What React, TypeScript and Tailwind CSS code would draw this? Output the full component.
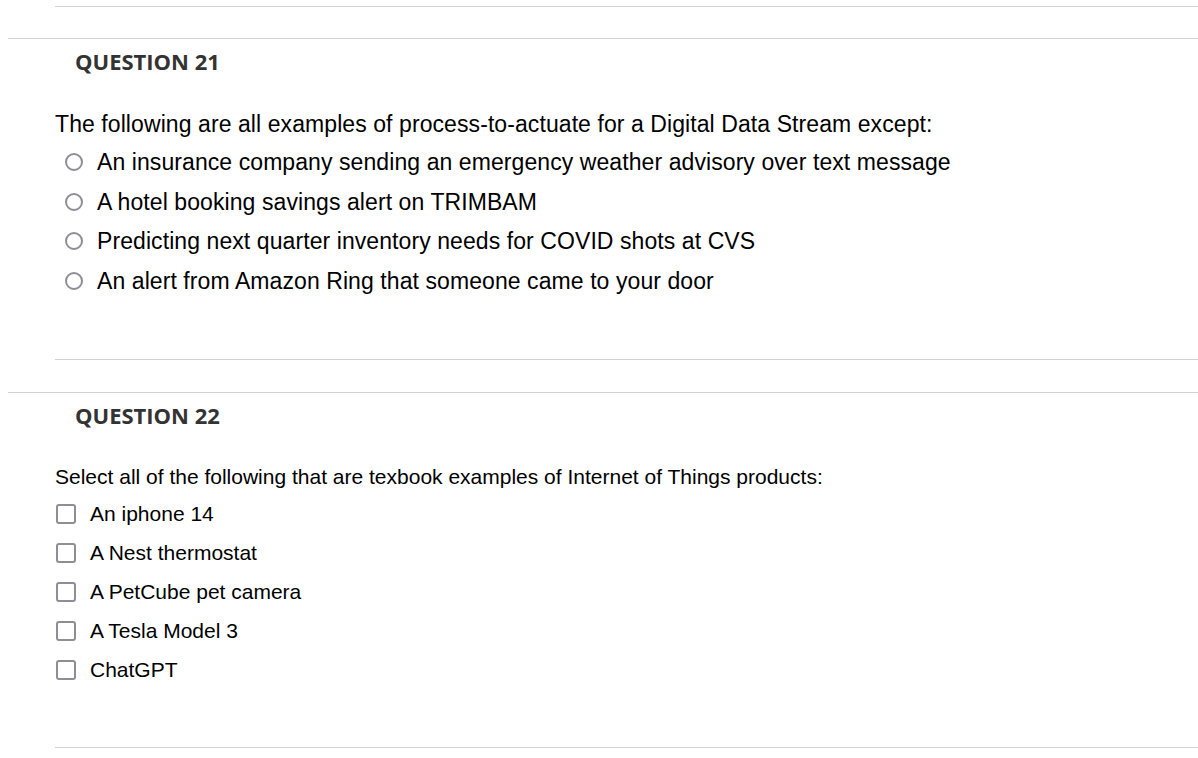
import React from "react";

const Radio = () => (
  <span className="inline-block w-[18px] h-[18px] rounded-full border-[2.5px] border-[#8f8e98] bg-white shrink-0" />
);

const Check = () => (
  <span className="inline-block w-[20px] h-[20px] rounded-[3px] border-[2.5px] border-[#8f8e98] bg-white shrink-0" />
);

export default function App() {
  const q21 = [
    "An insurance company sending an emergency weather advisory over text message",
    "A hotel booking savings alert on TRIMBAM",
    "Predicting next quarter inventory needs for COVID shots at CVS",
    "An alert from Amazon Ring that someone came to your door",
  ];
  const q22 = [
    "An iphone 14",
    "A Nest thermostat",
    "A PetCube pet camera",
    "A Tesla Model 3",
    "ChatGPT",
  ];
  return (
    <div className="w-[1198px] h-[758px] bg-white overflow-hidden" style={{ fontFamily: '"Liberation Sans", Arial, sans-serif' }}>
      <div className="pt-[6px] pl-[55px]">
        <div className="border-t border-[#d3d3d3]" />
      </div>
      <div className="mt-[31px] ml-[8px] border-t border-[#d3d3d3]">
        <div className="pl-[67px] pt-[7px] text-[22px] font-bold text-[#333333] leading-[30px]" style={{ fontFamily: '"Open Sans", sans-serif' }}>
          QUESTION 21
        </div>
        <div className="pl-[47px] mt-[36px] text-[23px] tracking-[0.08px] text-black leading-[24px]">
          The following are all examples of process-to-actuate for a Digital Data Stream except:
        </div>
        <div className="pl-[57px] mt-[14px] flex flex-col gap-[15.5px]">
          {q21.map((t) => (
            <div key={t} className="flex items-center gap-[14px] text-[23px] tracking-[0.08px] leading-[24px] text-black">
              <Radio />
              <span>{t}</span>
            </div>
          ))}
        </div>
      </div>
      <div className="mt-[66px] pl-[55px]">
        <div className="border-t border-[#d3d3d3]" />
      </div>
      <div className="mt-[32px] ml-[8px] border-t border-[#d3d3d3]">
        <div className="pl-[67px] pt-[7px] text-[22px] font-bold text-[#333333] leading-[30px]" style={{ fontFamily: '"Open Sans", sans-serif' }}>
          QUESTION 22
        </div>
        <div className="pl-[47px] mt-[36px] text-[21px] text-black leading-[22px]">
          Select all of the following that are texbook examples of Internet of Things products:
        </div>
        <div className="pl-[48px] mt-[15px] flex flex-col gap-[17px]">
          {q22.map((t) => (
            <div key={t} className="flex items-center gap-[14px] text-[21px] leading-[22px] text-black">
              <Check />
              <span>{t}</span>
            </div>
          ))}
        </div>
      </div>
      <div className="mt-[66px] pl-[55px]">
        <div className="border-t border-[#d3d3d3]" />
      </div>
    </div>
  );
}
